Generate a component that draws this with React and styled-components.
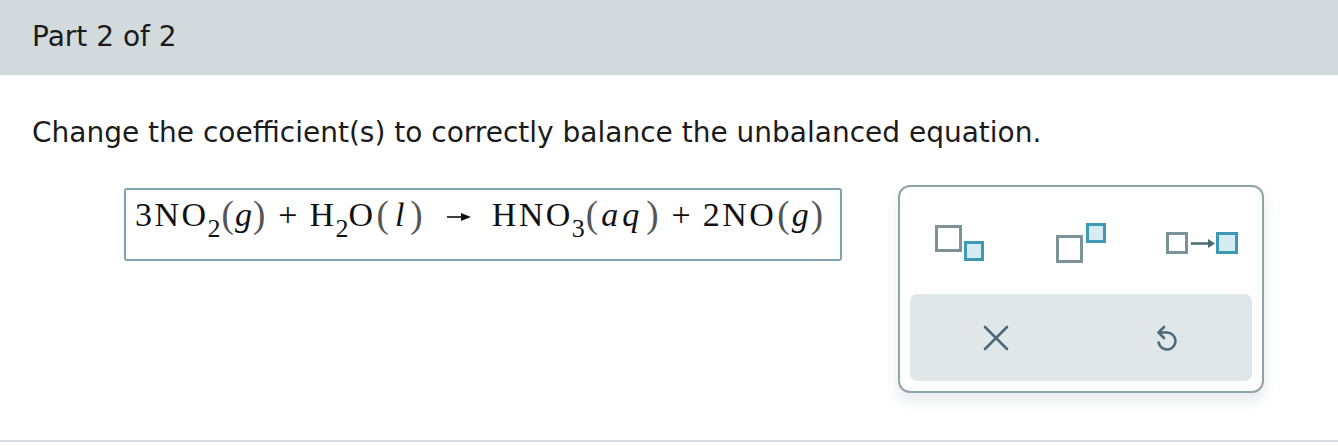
import React from "react";
import styled, { createGlobalStyle } from "styled-components";

const GlobalStyle = createGlobalStyle`
  html, body {
    margin: 0;
    padding: 0;
    background: #ffffff;
  }
  body {
    font-family: "DejaVu Sans", Verdana, sans-serif;
    color: #1b1b1b;
  }
`;

const ICON_GRAY = "#7b9399";
const ICON_TEAL = "#3e9ab4";
const ICON_FILL = "#d5edf2";
const DARK = "#4a6b77";

export default function App() {
  return (
    <>
      <GlobalStyle />
      <Page>
        <Header>Part 2 of 2</Header>
        <Body>
          <Prompt>
            Change the coefficient(s) to correctly balance the unbalanced
            equation.
          </Prompt>
          <Workspace>
            <EquationBox>
              <Chem>3NO</Chem>
              <Sub>2</Sub>
              <Paren>(</Paren>
              <Phase>g</Phase>
              <Paren>)</Paren>
              <Op>+</Op>
              <Chem>H</Chem>
              <Sub>2</Sub>
              <Chem>O</Chem>
              <Paren>(</Paren>
              <Phase $pad={5}>l</Phase>
              <Paren>)</Paren>
              <ArrowWrap>
                <svg width="26" height="12" viewBox="0 0 26 12">
                  <line x1="1" y1="6" x2="18" y2="6" stroke="#111" strokeWidth="1.6" />
                  <polygon points="15,2 25,6 15,10" fill="#111" />
                </svg>
              </ArrowWrap>
              <Chem>HNO</Chem>
              <Sub>3</Sub>
              <Paren>(</Paren>
              <Phase $pad={2} $spacing={4}>aq</Phase>
              <Paren>)</Paren>
              <Op>+</Op>
              <Chem>2NO</Chem>
              <Paren>(</Paren>
              <Phase $pad={1}>g</Phase>
              <Paren>)</Paren>
            </EquationBox>

            <Palette>
              <TemplateRow>
                <TemplateButton title="subscript">
                  <svg width="50" height="38" viewBox="0 0 50 38">
                    <rect x="1.5" y="2.5" width="24" height="24" fill="none" stroke={ICON_GRAY} strokeWidth="3" />
                    <rect x="30.5" y="18.5" width="17" height="17" fill={ICON_FILL} stroke={ICON_TEAL} strokeWidth="3" />
                  </svg>
                </TemplateButton>
                <TemplateButton title="superscript">
                  <svg width="50" height="42" viewBox="0 0 50 42">
                    <rect x="1.5" y="14.5" width="24" height="25" fill="none" stroke={ICON_GRAY} strokeWidth="3" />
                    <rect x="31.5" y="2.5" width="17" height="17" fill={ICON_FILL} stroke={ICON_TEAL} strokeWidth="3" />
                  </svg>
                </TemplateButton>
                <TemplateButton title="reaction arrow">
                  <svg width="74" height="25" viewBox="0 0 74 25">
                    <rect x="2.5" y="2.5" width="19" height="19" fill="none" stroke={ICON_GRAY} strokeWidth="3" />
                    <line x1="26" y1="12.5" x2="44" y2="12.5" stroke={DARK} strokeWidth="2.5" />
                    <polygon points="43,8 50,12.5 43,17" fill={DARK} />
                    <rect x="52.5" y="2.5" width="19" height="19" fill={ICON_FILL} stroke={ICON_TEAL} strokeWidth="3" />
                  </svg>
                </TemplateButton>
              </TemplateRow>
              <ActionBar>
                <ActionButton title="clear">
                  <svg width="26" height="26" viewBox="0 0 26 26">
                    <path d="M2 2 L24 24 M24 2 L2 24" stroke={DARK} strokeWidth="2.6" strokeLinecap="round" />
                  </svg>
                </ActionButton>
                <ActionButton title="undo">
                  <svg width="26" height="28" viewBox="0 0 26 28">
                    <path
                      d="M5 8.5 H13 A8.5 8.5 0 1 1 4.6 18.5"
                      fill="none"
                      stroke={DARK}
                      strokeWidth="2.6"
                      strokeLinecap="round"
                    />
                    <path
                      d="M10 3 L4.5 8.5 L10 14"
                      fill="none"
                      stroke={DARK}
                      strokeWidth="2.6"
                      strokeLinecap="round"
                      strokeLinejoin="round"
                    />
                  </svg>
                </ActionButton>
              </ActionBar>
            </Palette>
          </Workspace>
        </Body>
      </Page>
    </>
  );
}

const Page = styled.div`
  height: 440px;
  border-bottom: 2px solid #d6dcdf;
`;

const Header = styled.div`
  height: 75px;
  display: flex;
  align-items: center;
  padding: 0 0 2px 32px;
  background: #d3dadd;
  font-size: 28px;
  box-sizing: border-box;
`;

const Body = styled.div`
  padding: 40px 32px 0;
`;

const Prompt = styled.p`
  margin: 0;
  font-size: 28px;
  line-height: 36px;
  white-space: nowrap;
`;

const Workspace = styled.div`
  display: flex;
  align-items: flex-start;
  gap: 56px;
  padding: 34px 0 0 92px;
`;

const EquationBox = styled.div`
  margin-top: 3px;
  width: 718px;
  height: 73px;
  box-sizing: border-box;
  border: 2px solid #7fa3ae;
  border-radius: 3px;
  padding: 5px 0 0 9px;
  font-family: "Liberation Serif", "Times New Roman", serif;
  font-size: 34px;
  line-height: 40px;
  color: #111;
  white-space: nowrap;
`;

const Chem = styled.span`
  letter-spacing: 2.5px;
`;

const Sub = styled.span`
  font-size: 26px;
  vertical-align: -11px;
  line-height: 0;
  margin-left: -1px;
`;

const Paren = styled.span`
  color: #555;
  font-size: 37px;
  line-height: 0;
  vertical-align: -1px;
  margin: 0 1px;
`;

const Phase = styled.span`
  font-style: italic;
  padding: 0 ${(p) => p.$pad || 0}px;
  letter-spacing: ${(p) => p.$spacing || 0}px;
`;

const Op = styled.span`
  margin: 0 12px;
`;

const ArrowWrap = styled.span`
  display: inline-block;
  margin: 0 20px 0 22px;
  vertical-align: 3px;
  line-height: 0;
`;

const Palette = styled.div`
  width: 366px;
  height: 208px;
  box-sizing: border-box;
  border: 2px solid #8fa3a9;
  border-radius: 12px;
  background: #fff;
  box-shadow: 0 8px 14px rgba(60, 80, 90, 0.12);
  display: flex;
  flex-direction: column;
  padding: 0 10px 10px;
`;

const TemplateRow = styled.div`
  flex: 1;
  display: grid;
  grid-template-columns: repeat(3, 1fr);
  align-items: center;
  margin: 0 -10px;
  padding-bottom: 3px;
`;

const TemplateButton = styled.div`
  display: flex;
  justify-content: center;
  align-items: center;
  height: 100%;
  padding-top: 8px;
  box-sizing: border-box;
`;

const ActionBar = styled.div`
  height: 87px;
  background: #e1e6e9;
  border-radius: 7px;
  display: grid;
  grid-template-columns: 1fr 1fr;
  align-items: center;
`;

const ActionButton = styled.div`
  display: flex;
  justify-content: center;
  align-items: center;
`;
